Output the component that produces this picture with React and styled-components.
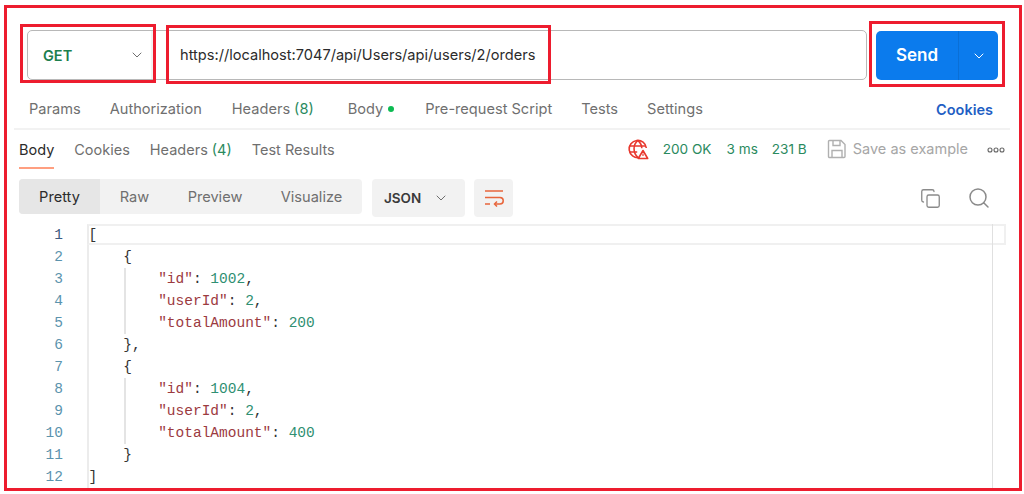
import styled, { createGlobalStyle } from 'styled-components';
import { ChevronDown, Copy, Search } from 'lucide-react';

const GlobalStyle = createGlobalStyle`
  html, body {
    margin: 0;
    padding: 0;
    background: #fff;
    font-family: Inter, "Liberation Sans", sans-serif;
  }
`;

const Frame = styled.div`
  box-sizing: border-box;
  width: 1018px;
  height: 486px;
  margin: 5px 0 0 4px;
  border: 3px solid #ed1c2e;
  overflow: hidden;
  display: flex;
  flex-direction: column;
`;

const RequestBar = styled.div`
  display: flex;
  margin: 22px 0 0 20px;
  height: 50px;
`;

const UrlGroup = styled.div`
  box-sizing: border-box;
  width: 840px;
  display: flex;
  align-items: center;
  border: 1px solid #b8b8b8;
  border-radius: 5px;
`;

const MethodSelect = styled.div`
  position: relative;
  box-sizing: border-box;
  width: 125px;
  height: 100%;
  display: flex;
  align-items: center;
  justify-content: space-between;
  padding: 0 6px 0 15px;
  font-size: 14.5px;
  font-weight: 600;
  color: #1d7f4e;
  border-right: 2px solid #f2f2f2;
`;

const UrlField = styled.div`
  position: relative;
  flex: 1;
  padding: 0 0 0 27px;
  font-size: 14.6px;
  color: #2b2b2b;
`;

const Highlight = styled.span`
  position: absolute;
  pointer-events: none;
  border: 3px solid #ed1c2e;
  top: ${p => p.$top}px;
  left: ${p => p.$left}px;
  width: ${p => p.$width}px;
  height: ${p => p.$height}px;
`;

const SendGroup = styled.div`
  position: relative;
  width: 122px;
  height: 49px;
  margin: 1px 0 0 9px;
  display: flex;
  background: #0b7bed;
  border-radius: 5px;
  color: #fff;
`;

const SendLabel = styled.div`
  width: 83px;
  display: flex;
  align-items: center;
  justify-content: center;
  padding-bottom: 2px;
  box-sizing: border-box;
  font-size: 17px;
  font-weight: 600;
  border-right: 1px solid #0a6fd6;
`;

const SendArrow = styled.div`
  flex: 1;
  display: flex;
  align-items: center;
  justify-content: center;
`;

const RequestTabs = styled.div`
  position: relative;
  display: flex;
  align-items: center;
  height: 50px;
  margin-left: 7px;
  width: 996px;
  border-bottom: 2px solid #f2f2f2;
  box-sizing: border-box;
  padding: 10px 0 0 15px;
`;

const TabLabel = styled.span`
  font-size: 14.6px;
  color: ${p => (p.$active ? '#2b2b2b' : '#6f6f6f')};
  margin-right: ${p => p.$gap}px;
  display: inline-flex;
  align-items: center;
  white-space: nowrap;
`;

const Count = styled.span`
  color: #2a8a5e;
  margin-left: 4px;
`;

const Dot = styled.span`
  width: 6px;
  height: 6px;
  border-radius: 50%;
  background: #0cbb52;
  margin-left: 5px;
`;

const CookiesLink = styled.span`
  margin-left: auto;
  margin-right: 17px;
  font-size: 14.5px;
  font-weight: 600;
  color: #1f5fc4;
`;

const ResponseBar = styled.div`
  display: flex;
  align-items: center;
  height: 39px;
  margin-left: 12px;
  width: 994px;
`;

const ResponseTab = styled.div`
  box-sizing: border-box;
  height: 39px;
  padding-top: 2px;
  display: flex;
  align-items: center;
  margin-right: ${p => p.$gap}px;
  font-size: 14.5px;
  color: ${p => (p.$active ? '#2b2b2b' : '#6f6f6f')};
  border-bottom: 2px solid ${p => (p.$active ? '#ff9f80' : 'transparent')};
  white-space: nowrap;
`;

const Status = styled.div`
  margin-left: auto;
  display: flex;
  align-items: center;
  font-size: 13.6px;
  color: #2a8a5e;
  padding: 0 8px 2px 0;
`;

const StatusText = styled.span`
  margin-right: ${p => p.$gap}px;
  white-space: nowrap;
`;

const SaveExample = styled.span`
  display: inline-flex;
  align-items: center;
  gap: 6px;
  font-size: 14.5px;
  color: #a6a6a6;
  margin-right: 19px;
`;

const Toolbar = styled.div`
  display: flex;
  align-items: flex-start;
  height: 44.5px;
  margin: 10px 0 0 12px;
  width: 994px;
`;

const Segments = styled.div`
  display: flex;
  width: 343px;
  height: 35px;
  background: #f2f2f2;
  border-radius: 4px;
  overflow: hidden;
`;

const Segment = styled.div`
  box-sizing: border-box;
  width: ${p => p.$width}px;
  display: flex;
  align-items: center;
  justify-content: center;
  font-size: 14.6px;
  color: ${p => (p.$active ? '#2b2b2b' : '#6f6f6f')};
  background: ${p => (p.$active ? '#e6e6e6' : 'transparent')};
`;

const FormatSelect = styled.div`
  box-sizing: border-box;
  width: 93px;
  height: 38px;
  margin-left: 10px;
  padding: 0 16px 0 12px;
  display: flex;
  align-items: center;
  justify-content: space-between;
  background: #f2f2f2;
  border-radius: 4px;
  font-size: 13.5px;
  font-weight: 600;
  color: #3a3a3a;
`;

const WrapButton = styled.div`
  width: 39px;
  height: 38px;
  margin-left: 9px;
  display: flex;
  align-items: center;
  justify-content: center;
  background: #f2f2f2;
  border-radius: 4px;
`;

const ToolIcons = styled.div`
  margin-left: auto;
  display: flex;
  align-items: center;
  gap: 26px;
  height: 38px;
  padding-right: 22px;
  color: #8a8a8a;
`;

const Editor = styled.div`
  position: relative;
  flex: 1;
  display: flex;
  font-family: "Liberation Mono", monospace;
  font-size: 14.5px;
  line-height: 22px;
  overflow: hidden;
`;

const Gutter = styled.div`
  width: 49px;
  text-align: right;
  margin-left: 7px;
  color: #5b93ad;
`;

const LineNumber = styled.div`
  height: 22px;
  color: ${p => (p.$active ? '#3d5a80' : 'inherit')};
`;

const Code = styled.div`
  position: relative;
  margin-left: 24px;
  width: 919px;
  border-left: 2px solid #ececec;
  box-sizing: border-box;
`;

const ActiveLine = styled.div`
  position: absolute;
  top: 0;
  left: -2px;
  right: 0;
  height: 21px;
  border: 2px solid #f0f0f0;
  border-left-color: #ececec;
  box-sizing: border-box;
`;

const Ruler = styled.div`
  position: absolute;
  top: 0;
  bottom: 0;
  left: 903px;
  width: 1px;
  background: #e0e0e0;
`;

const IndentGuide = styled.div`
  position: absolute;
  left: 35px;
  top: ${p => p.$top}px;
  height: 66px;
  width: 2px;
  background: #e4e4e4;
`;

const CodeLine = styled.div`
  position: relative;
  height: 22px;
  margin-left: -0.5px;
  white-space: pre;
  color: #333;
`;

const Key = styled.span`
  color: #9c3a3f;
`;

const Num = styled.span`
  color: #2f8f72;
`;

const GlobeWarning = () => (
  <svg width="22" height="22" viewBox="0 0 22 22" fill="none" stroke="#e8392f" strokeWidth="1.6" style={{ marginRight: 14 }}>
    <path d="M12 19.5A8.6 8.6 0 1 1 19.3 10" />
    <path d="M2.2 8h16M2.2 14h8" />
    <path d="M10.8 2.3c-5 4.5-5 12.5 0 17M10.8 2.3c2.8 2.5 4 5.300 4 8" />
    <path d="M16 12.500l4.700 8h-9.400z" fill="#fff" strokeLinejoin="round" />
    <path d="M16 15.500v2.500" strokeWidth="1.200" />
  </svg>
);

const SaveIcon = () => (
  <svg width="20" height="20" viewBox="0 0 20 20" fill="none" stroke="#b0b0b0" strokeWidth="1.4">
    <path d="M2.500 1.500h11.500l4 4v12a1 1 0 0 1-1 1h-14.500a1 1 0 0 1-1-1v-15a1 1 0 0 1 1-1z" />
    <path d="M6 1.500v5h7v-5M5 18.500v-7h10v7" />
  </svg>
);

const MoreIcon = () => (
  <svg width="18" height="6" viewBox="0 0 18 6" fill="none" stroke="#666" strokeWidth="1.100" style={{ marginTop: 3 }}>
    <circle cx="3" cy="3" r="2" />
    <circle cx="9" cy="3" r="2" />
    <circle cx="15" cy="3" r="2" />
  </svg>
);

const WrapIcon = () => (
  <svg width="20" height="18" viewBox="0 0 20 18" fill="none" stroke="#e8663c" strokeWidth="1.500">
    <path d="M1 2h18M1 8.500h15a2.800 2.800 0 0 1 0 6.500h-5" />
    <path d="M13 12.500l-2.500 2.500 2.500 2.500M1 15h5" />
  </svg>
);

const requestTabs = [
  { label: 'Params', gap: 29 },
  { label: 'Authorization', gap: 30 },
  { label: 'Headers', count: '(8)', gap: 34 },
  { label: 'Body', dot: true, gap: 31 },
  { label: 'Pre-request Script', gap: 29 },
  { label: 'Tests', gap: 29 },
  { label: 'Settings', gap: 0 },
];

const responseTabs = [
  { label: 'Body', active: true, gap: 20 },
  { label: 'Cookies', gap: 20 },
  { label: 'Headers', count: '(4)', gap: 20 },
  { label: 'Test Results', gap: 0 },
];

const segments = [
  { label: 'Pretty', width: 81, active: true },
  { label: 'Raw', width: 69 },
  { label: 'Preview', width: 92 },
  { label: 'Visualize', width: 101 },
];

const order = (id, amount, close) => [
  <>{'    {'}</>,
  <>{'        '}<Key>"id"</Key>: <Num>{id}</Num>,</>,
  <>{'        '}<Key>"userId"</Key>: <Num>2</Num>,</>,
  <>{'        '}<Key>"totalAmount"</Key>: <Num>{amount}</Num></>,
  <>{close}</>,
];

const lines = [
  <>[</>,
  ...order(1002, 200, '    },'),
  ...order(1004, 400, '    }'),
  <>]</>,
];

export default function App() {
  return (
    <>
      <GlobalStyle />
      <Frame>
        <RequestBar>
          <UrlGroup>
            <MethodSelect>
              GET
              <ChevronDown size={16} color="#6f6f6f" strokeWidth={1.5} />
              <Highlight $top={-7} $left={-8} $width={130} $height={53} />
            </MethodSelect>
            <UrlField>
              https://localhost:7047/api/Users/api/users/2/orders
              <Highlight $top={-21} $left={13} $width={379} $height={53} />
            </UrlField>
          </UrlGroup>
          <SendGroup>
            <SendLabel>Send</SendLabel>
            <SendArrow>
              <ChevronDown size={16} color="#fff" strokeWidth={1.5} />
            </SendArrow>
            <Highlight $top={-10} $left={-7} $width={130} $height={60} />
          </SendGroup>
        </RequestBar>

        <RequestTabs>
          {requestTabs.map(tab => (
            <TabLabel key={tab.label} $gap={tab.gap}>
              {tab.label}
              {tab.count && <Count>{tab.count}</Count>}
              {tab.dot && <Dot />}
            </TabLabel>
          ))}
          <CookiesLink>Cookies</CookiesLink>
        </RequestTabs>

        <ResponseBar>
          {responseTabs.map(tab => (
            <ResponseTab key={tab.label} $active={tab.active} $gap={tab.gap}>
              {tab.label}
              {tab.count && <Count>{tab.count}</Count>}
            </ResponseTab>
          ))}
          <Status>
            <GlobeWarning />
            <StatusText $gap={15}>200 OK</StatusText>
            <StatusText $gap={14}>3 ms</StatusText>
            <StatusText $gap={20}>231 B</StatusText>
            <SaveExample>
              <SaveIcon />
              Save as example
            </SaveExample>
            <MoreIcon />
          </Status>
        </ResponseBar>

        <Toolbar>
          <Segments>
            {segments.map(seg => (
              <Segment key={seg.label} $width={seg.width} $active={seg.active}>
                {seg.label}
              </Segment>
            ))}
          </Segments>
          <FormatSelect>
            JSON
            <ChevronDown size={16} color="#6f6f6f" strokeWidth={1.5} />
          </FormatSelect>
          <WrapButton>
            <WrapIcon />
          </WrapButton>
          <ToolIcons>
            <Copy size={21} strokeWidth={1.5} />
            <Search size={24} strokeWidth={1.5} />
          </ToolIcons>
        </Toolbar>

        <Editor>
          <Gutter>
            {lines.map((_, i) => (
              <LineNumber key={i} $active={i === 0}>{i + 1}</LineNumber>
            ))}
          </Gutter>
          <Code>
            <ActiveLine />
            <Ruler />
            <IndentGuide $top={44} />
            <IndentGuide $top={154} />
            {lines.map((line, i) => (
              <CodeLine key={i}>{line}</CodeLine>
            ))}
          </Code>
        </Editor>
      </Frame>
    </>
  );
}
